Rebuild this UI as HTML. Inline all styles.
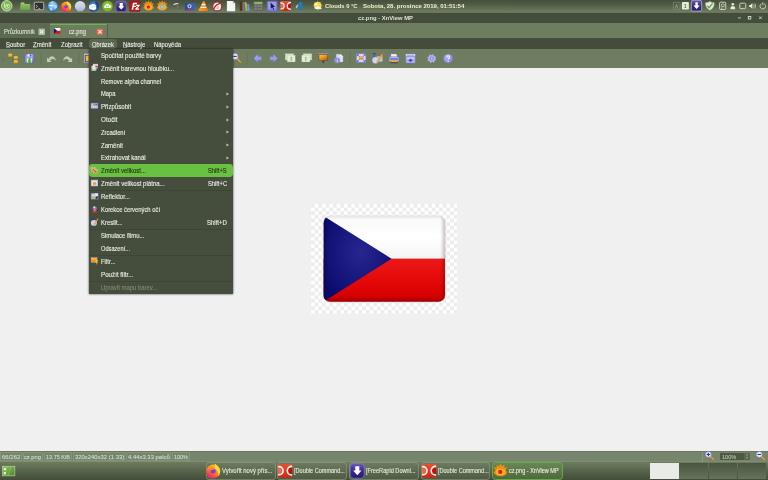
<!DOCTYPE html>
<html><head><meta charset="utf-8">
<style>
*{box-sizing:border-box;margin:0;padding:0}
html,body{width:768px;height:480px;overflow:hidden;background:#f0f0f0;font-family:"Liberation Sans",sans-serif;}
.abs,.t,.i{position:absolute}
svg{position:absolute;overflow:visible}
#panel{left:0;top:0;width:768px;height:13px;background:linear-gradient(#454f3c,#4e5a43 30%,#6a785b 85%,#74836a 93%,#5a6650 100%);}
#title{left:0;top:13px;width:768px;height:10.4px;background:#444c3c;}
#tabs{left:0;top:23.2px;width:768px;height:15.8px;background:#6e7c5f;}
#menubar{left:0;top:38.3px;width:768px;height:10.7px;background:#444c3c;}
#toolbar{left:0;top:49px;width:768px;height:18.5px;background:#6e7c5f;}
#status{left:0;top:450.8px;width:768px;height:11.2px;background:#76856b;border-top:1px solid #69785d}
#taskbar{left:0;top:461.3px;width:768px;height:18.7px;background:linear-gradient(#82927a 0,#7c8b72 0.7px,#6c7b60 1.2px,#5a674e 45%,#434d3a 100%);}
.t{white-space:nowrap;transform-origin:0 0;-webkit-text-stroke:0.8px currentColor}
.t u{text-decoration-thickness:3px;text-underline-offset:2px}
.tb{position:absolute;top:462.4px;height:17.2px;border:0.8px solid rgba(150,165,135,.5);border-radius:3.5px;background:rgba(120,135,105,.22)}
.sf{position:absolute;top:452.2px;height:9.2px;border:0.5px solid rgba(150,166,136,.45);}
#txt{position:absolute;left:0;top:0;width:768px;height:480px;will-change:transform}

</style></head><body>
<div id="panel" class="abs"></div>
<div id="title" class="abs"></div>
<div id="tabs" class="abs"></div>
<div id="menubar" class="abs"></div>
<div id="toolbar" class="abs"></div>
<div id="status" class="abs"></div>
<div id="taskbar" class="abs"></div>

<!-- TABS -->
<div class="abs" style="left:0;top:23.3px;width:50px;height:14.7px;background:#5c6952"></div>
<div class="abs" style="left:50px;top:23.6px;width:57.5px;height:1.2px;background:#62b944"></div>
<div class="abs" style="left:107px;top:23.6px;width:0.8px;height:14.7px;background:#56634b"></div>
<!-- inactive close -->
<svg style="left:38px;top:28px" width="8" height="8" viewBox="38 28 8 8"><rect x="38.400" y="28.500" width="6.600" height="6.400" rx="0.900" fill="#a9b89c"/><path d="M40.100 30.100L43.300 33.300M43.300 30.100L40.100 33.300" stroke="#f2f6ec" stroke-width="1.100"/></svg>
<!-- active close -->
<svg style="left:96px;top:28px" width="8" height="8" viewBox="96 28 8 8"><rect x="96.600" y="28.500" width="6.600" height="6.400" rx="0.900" fill="#e0694f"/><path d="M98.300 30.100L101.500 33.300M101.500 30.100L98.300 33.300" stroke="#fdeeea" stroke-width="1.100"/></svg>
<!-- flag tab icon -->
<svg style="left:53.75px;top:28.25px" width="6.3" height="5.7" viewBox="0 0 63 57"><rect width="63" height="28.5" fill="#fafafa"/><rect y="28.5" width="63" height="28.5" fill="#e01414"/><path d="M0 0L31 28.5L0 57z" fill="#15157a"/></svg>

<!-- TOOLBAR ICONS -->
<svg style="left:0;top:49px" width="768" height="19" viewBox="0 49 768 19">
<defs>
<linearGradient id="lv" x1="0" y1="0" x2="0" y2="1"><stop offset="0" stop-color="#aeb0f6"/><stop offset="1" stop-color="#8587e2"/></linearGradient>
<linearGradient id="og" x1="0" y1="0" x2="0" y2="1"><stop offset="0" stop-color="#ffc42a"/><stop offset="1" stop-color="#ec7a0c"/></linearGradient>
<radialGradient id="hp" cx="0.4" cy="0.35" r="0.75"><stop offset="0" stop-color="#adaff2"/><stop offset="0.6" stop-color="#9698e6"/><stop offset="1" stop-color="#7a7cd4"/></radialGradient>
</defs>
<!-- grip -->
<path d="M3 57.200v.8M3 58.800v.8M3 60.400v.8" stroke="#56634b" stroke-width="0.800"/>
<!-- tree -->
<linearGradient id="fy" x1="0" y1="0" x2="0" y2="1"><stop offset="0" stop-color="#fdd648"/><stop offset="0.45" stop-color="#f9b824"/><stop offset="1" stop-color="#ee9410"/></linearGradient>
<linearGradient id="flp" x1="0" y1="0" x2="1" y2="1"><stop offset="0" stop-color="#8a8ce6"/><stop offset="0.5" stop-color="#a2a4f0"/><stop offset="1" stop-color="#6668d4"/></linearGradient>
<path d="M12.700 57.500v4.300h1M12.700 57.800h1" fill="none" stroke="#4e5a44" stroke-width="0.400" opacity=".7"/>
<rect x="8.300" y="53.700" width="3.800" height="3.100" rx="0.300" fill="url(#fy)"/>
<rect x="13.800" y="56.200" width="3.900" height="2.900" rx="0.300" fill="url(#fy)"/>
<rect x="13.800" y="60.200" width="3.900" height="3.100" rx="0.300" fill="url(#fy)"/>
<!-- save -->
<rect x="25.200" y="54.100" width="8.500" height="8.500" rx="0.700" fill="url(#flp)" stroke="#5658c0" stroke-width="0.300"/>
<rect x="27.400" y="54.300" width="4.600" height="2.500" fill="#c4c6f6"/>
<rect x="27.600" y="54.400" width="1.700" height="1.700" fill="#f2f2fc"/>
<rect x="29.900" y="54.600" width="1.400" height="1.800" fill="#4446a8"/>
<rect x="27" y="58.400" width="5.100" height="4.100" fill="#f0f0fb"/>
<path d="M28.700 58.300h1.700v2.400h1.100l-1.950 2.900l-1.950-2.900h1.100z" fill="#3ab82e" stroke="#2a9a22" stroke-width="0.250"/>
<!-- sep -->
<path d="M40.750 52v13M78.750 52v13M247.400 52v13M350.300 52v13" stroke="#5f6c53" stroke-width="0.500"/>
<!-- undo -->
<path d="M46.900 57.500V62h4.500l-1.500-1.500q1.500-1.900 3.500-1.500q1.500.400 2.400 2q-.200-3.800-3.200-4.700q-2.800-.500-4.300 2.600z" fill="#c3d1b5" opacity=".92"/>
<!-- redo -->
<path d="M72.100 57.500V62h-4.500l1.500-1.500q-1.500-1.900-3.500-1.500q-1.500.400-2.400 2q.200-3.800 3.200-4.700q2.800-.500 4.300 2.600z" fill="#c3d1b5" opacity=".92"/>
<!-- partially hidden icon -->
<rect x="84.400" y="53.900" width="6" height="8.500" fill="#d8d8f6" stroke="#a8a8e4" stroke-width="0.400"/>
<rect x="85.300" y="55.200" width="5" height="6.600" fill="#f2a01e" stroke="#2c3298" stroke-width="0.700"/>
<rect x="86.300" y="56.200" width="1.400" height="4.500" fill="#fbd05a"/>
<path d="M85.200 54.500h.8M87.400 54.500h.8" stroke="#f6d040" stroke-width="0.700"/>
<!-- zoom out -->
<path d="M237.400 58.800l3 3.300" stroke="#a86a28" stroke-width="2.100" stroke-linecap="round"/>
<path d="M237.400 58.800l3 3.300" stroke="#e2a452" stroke-width="1.300" stroke-linecap="round"/>
<circle cx="235" cy="56.400" r="2.900" fill="#f0f0fc" stroke="#9698de" stroke-width="0.600"/>
<path d="M233.200 56.400h3.600" stroke="#2c2cb0" stroke-width="1.100"/>
<!-- arrows -->
<path d="M253.600 58.500l4.300-4.200v2.400h3.500v3.600h-3.500v2.400z" fill="url(#lv)" stroke="#7476d0" stroke-width="0.300"/>
<path d="M277.700 58.500l-4.300-4.200v2.400h-3.500v3.600h3.500v2.400z" fill="url(#lv)" stroke="#7476d0" stroke-width="0.300"/>
<!-- pale boxes 1 -->
<rect x="285.200" y="53.800" width="8.400" height="6.200" fill="#d3e1c6" stroke="#bfcfb0" stroke-width="0.350"/>
<rect x="287.400" y="55.200" width="7.700" height="6.700" fill="#e4efd9" stroke="#c6d5b8" stroke-width="0.350"/>
<path d="M291.300 56.600l1.600 1.500h-1v1.400h1l-1.600 1.500l-1.600-1.500h1v-1.400h-1z" fill="#a9b99b"/>
<!-- pale boxes 2 -->
<rect x="303.300" y="53.800" width="8.500" height="6.200" fill="#d3e1c6" stroke="#bfcfb0" stroke-width="0.350"/>
<rect x="301.900" y="55.200" width="8" height="6.700" fill="#e4efd9" stroke="#c6d5b8" stroke-width="0.350"/>
<path d="M305.800 56.600l1.600 1.500h-1v1.400h1l-1.600 1.500l-1.600-1.500h1v-1.400h-1z" fill="#a9b99b"/>
<!-- slideshow -->
<linearGradient id="ss" x1="0" y1="0" x2="0.6" y2="1"><stop offset="0" stop-color="#ffd030"/><stop offset="0.5" stop-color="#f49a14"/><stop offset="1" stop-color="#c8600a"/></linearGradient>
<rect x="318.100" y="53.100" width="10.200" height="1.300" fill="#8e949a"/>
<rect x="318.900" y="54.400" width="8.800" height="6.300" fill="url(#ss)" stroke="#4e5668" stroke-width="0.600"/>
<path d="M321.800 61h3l-1.500 2.600z" fill="#40463e"/>
<!-- doc info -->
<path d="M336.200 54.200h4.600l2.200 2.200v5.500h-6.800z" fill="#dedef8" stroke="#b4b4e0" stroke-width="0.300"/>
<path d="M340.800 54.200v2.200h2.200z" fill="#f6f6fe"/>
<circle cx="337.300" cy="60.300" r="2.700" fill="#8688e2" stroke="#a8aaf0" stroke-width="0.500"/>
<path d="M337.300 59.800v2M337.300 58.500v.6" stroke="#fff" stroke-width="0.800"/>
<!-- fullscreen -->
<rect x="356.400" y="53.800" width="9.500" height="8.500" fill="#d5d5fa" stroke="#7478de" stroke-width="0.400"/>
<path d="M357.100 54.500l2.400 2.200M365.200 54.500l-2.400 2.200M357.100 61.600l2.400-2.200M365.200 61.600l-2.400-2.200" stroke="#4a50cc" stroke-width="0.700"/>
<path d="M356.900 54.300h1.900l-1.900 1.900zM365.400 54.300h-1.900l1.900 1.900zM356.900 61.800h1.900l-1.900-1.900zM365.400 61.800h-1.900l1.900-1.900z" fill="#3a42c4"/>
<rect x="359.300" y="56.700" width="3.800" height="2.500" fill="url(#og)" stroke="#c8780e" stroke-width="0.250"/>
<!-- paint -->
<path d="M372.500 53.500h3.600M374.300 53.500v3.400" stroke="#3a42b4" stroke-width="0.900"/>
<rect x="377" y="56.300" width="5.400" height="5.300" fill="#c4c6f4" stroke="#a2a4e8" stroke-width="0.400"/>
<circle cx="375.600" cy="60.300" r="3.300" fill="#d4d4fa" stroke="#9a9ce4" stroke-width="0.400"/>
<path d="M382 53.200l1.300 1l-4.700 7.500l-1.800 1l.4-2z" fill="#f6b42c" stroke="#a86418" stroke-width="0.300"/>
<path d="M382 53.200l1.300 1l-.7 1.100l-1.300-1z" fill="#e84a5a"/>
<!-- printer -->
<path d="M391 57v-2.900h5l.9.900v2z" fill="#eeeef8" stroke="#b4b4d8" stroke-width="0.300"/>
<rect x="389" y="56.700" width="10" height="4.800" rx="1.200" fill="#b2b6ee" stroke="#6a6ed4" stroke-width="0.400"/>
<path d="M389.600 59h8.800" stroke="#3a40b0" stroke-width="0.900"/>
<rect x="391.100" y="60.300" width="6" height="2" fill="#f8b424" stroke="#c47a10" stroke-width="0.250"/>
<rect x="390.600" y="62.300" width="7" height="0.900" fill="#2e3268"/>
<!-- capture -->
<rect x="405.800" y="54" width="9.400" height="2.600" fill="#e6e6fb" stroke="#8a8cd8" stroke-width="0.400"/>
<path d="M406.600 55.300h7.800" stroke="#5a5ed0" stroke-width="0.500"/>
<path d="M405.800 56.600h9.400v5.500q0 1-1 1h-7.400q-1 0-1-1z" fill="#b2b4f2" stroke="#7a7cd8" stroke-width="0.400"/>
<path d="M407.200 58.200h6.600" stroke="#e8e8fc" stroke-width="0.700"/>
<circle cx="410.500" cy="60.300" r="1.500" fill="#3c46cc"/>
<path d="M407.600 60.300h1.200M412.200 60.300h1.200" stroke="#4a52cc" stroke-width="0.700"/>
<!-- gear -->
<g transform="translate(431.700 58.500)">
<circle r="3.800" fill="none" stroke="#a8aaf0" stroke-width="1.200" stroke-dasharray="1.600 1.385"/>
<circle r="3.500" fill="#b2b4f5"/>
<circle r="2" fill="#8284da"/>
<circle r="1" fill="#d0d2fc"/>
</g>
<!-- help -->
<circle cx="448.100" cy="58.500" r="4.600" fill="url(#hp)" stroke="#7678d0" stroke-width="0.500"/>
<path d="M446.700 57.200q.1-1.500 1.500-1.500q1.400.1 1.400 1.300q0 .8-.8 1.300q-.6.400-.6 1.100" fill="none" stroke="#fafaff" stroke-width="1.100"/>
<circle cx="448.200" cy="61.300" r=".65" fill="#fafaff"/>
</svg>

<!-- MENUBAR highlight -->
<div class="abs" style="left:88.6px;top:39px;width:28.4px;height:10px;background:#5b6851;border-radius:3px"></div>

<!-- POPUP -->
<div id="popup" class="abs" style="left:89px;top:49px;width:143.7px;height:245.2px;background:#454d3c;box-shadow:0 0.4px 2px rgba(0,0,0,.75)"></div>
<div class="abs" style="left:89.1px;top:164.4px;width:143.6px;height:13px;background:#6ac040;border-radius:3.4px"></div>

<!-- IMAGE -->
<svg style="left:310.75px;top:204.25px" width="146.5" height="109.75" viewBox="0 0 320 240">
<defs>
<pattern id="ck" width="16" height="16" patternUnits="userSpaceOnUse"><rect width="16" height="16" fill="#fefefe"/><rect width="8" height="8" fill="#ececec"/><rect x="8" y="8" width="8" height="8" fill="#ececec"/></pattern>
<clipPath id="fc"><rect x="27" y="26.500" width="266" height="187.500" rx="15" ry="15"/></clipPath>
<linearGradient id="gw" x1="0" y1="0" x2="0" y2="1"><stop offset="0" stop-color="#e4e4e4"/><stop offset="0.08" stop-color="#fafafa"/><stop offset="0.5" stop-color="#ffffff"/><stop offset="1" stop-color="#f4f4f4"/></linearGradient>
<linearGradient id="gr" x1="0" y1="0" x2="0" y2="1"><stop offset="0" stop-color="#ec1818"/><stop offset="0.6" stop-color="#e30606"/><stop offset="0.88" stop-color="#d40000"/><stop offset="1" stop-color="#9c0000"/></linearGradient>
<radialGradient id="gb" cx="0.55" cy="0.42" r="0.65"><stop offset="0" stop-color="#26268e"/><stop offset="0.6" stop-color="#15157c"/><stop offset="1" stop-color="#0a0a6c"/></radialGradient>
<linearGradient id="ge" x1="0" y1="0" x2="1" y2="0"><stop offset="0" stop-color="#000" stop-opacity=".25"/><stop offset="0.04" stop-color="#000" stop-opacity="0"/><stop offset="0.96" stop-color="#000" stop-opacity="0"/><stop offset="1" stop-color="#000" stop-opacity=".22"/></linearGradient>
</defs>
<rect width="320" height="240" fill="url(#ck)"/>
<rect x="26" y="25.500" width="268" height="189.500" rx="16" fill="#c98080" opacity=".4"/>
<g clip-path="url(#fc)">
<rect x="27" y="26" width="266" height="94" fill="url(#gw)"/>
<rect x="27" y="119.500" width="266" height="95" fill="url(#gr)"/>
<path d="M27 26L176 119.500L27 214z" fill="url(#gb)"/>
<rect x="27" y="26" width="266" height="188.500" fill="url(#ge)"/>
</g>
</svg>

<!-- STATUS fields -->
<div class="sf" style="left:0.3px;width:21.8px"></div>
<div class="sf" style="left:22.8px;width:20px"></div>
<div class="sf" style="left:43.5px;width:28.4px"></div>
<div class="sf" style="left:72.6px;width:52.7px"></div>
<div class="sf" style="left:126px;width:45.4px"></div>
<div class="sf" style="left:172.1px;width:18px"></div>
<div class="abs" style="left:702px;top:451.5px;width:0.8px;height:10.5px;background:#8a987e"></div>
<div class="abs" style="left:719.5px;top:452.9px;width:30.2px;height:6.9px;background:#4e5944;border-radius:1px"></div>
<div class="abs" style="left:744.1px;top:452.9px;width:5.6px;height:6.9px;background:#5a6750;border-radius:0 1px 1px 0"></div>

<!-- TASKBAR buttons -->
<div class="tb" style="left:205.5px;width:70px"></div>
<div class="tb" style="left:276.6px;width:70.2px"></div>
<div class="tb" style="left:348.6px;width:70.3px"></div>
<div class="tb" style="left:420.5px;width:69.8px"></div>
<div class="tb" style="left:492.1px;width:70.7px;border-color:#62ac44;background:linear-gradient(rgba(105,145,80,.6),rgba(85,125,62,.55))"></div>
<!-- workspace switcher -->
<div class="abs" style="left:650px;top:462.6px;width:28.8px;height:16.2px;background:#e9ebe6"></div>
<div class="abs" style="left:679.3px;top:462.6px;width:28.8px;height:16.2px;background:linear-gradient(#4a553f,#65735a)"></div>
<div class="abs" style="left:708.7px;top:462.6px;width:28.6px;height:16.2px;background:linear-gradient(#4a553f,#65735a)"></div>
<div class="abs" style="left:737.8px;top:462.6px;width:28.4px;height:16.2px;background:linear-gradient(#4a553f,#65735a)"></div>

<!-- PANEL ICONS -->
<svg style="left:0;top:0" width="768" height="13" viewBox="0 0 768 13">
<defs>
<linearGradient id="fold" x1="0" y1="0" x2="0" y2="1"><stop offset="0" stop-color="#94c56c"/><stop offset="1" stop-color="#6b9f48"/></linearGradient>
<radialGradient id="globe" cx="0.55" cy="0.4" r="0.62"><stop offset="0" stop-color="#a8d4f6"/><stop offset="0.55" stop-color="#6eb2ea"/><stop offset="0.85" stop-color="#2f7bcc"/><stop offset="1" stop-color="#185aa8"/></radialGradient>
<linearGradient id="ffx" x1="0.8" y1="0.1" x2="0.25" y2="0.95"><stop offset="0" stop-color="#ffc830"/><stop offset="0.45" stop-color="#ff8a20"/><stop offset="0.8" stop-color="#fb4a3a"/><stop offset="1" stop-color="#f0306a"/></linearGradient>
<linearGradient id="ball" x1="0" y1="0" x2="0" y2="1"><stop offset="0" stop-color="#d4dfee"/><stop offset="0.55" stop-color="#c3d1e5"/><stop offset="1" stop-color="#a5a6cf"/></linearGradient>
<radialGradient id="tb" cx="0.5" cy="0.4" r="0.65"><stop offset="0" stop-color="#4a9cf0"/><stop offset="1" stop-color="#17479c"/></radialGradient>
<linearGradient id="purp" x1="0" y1="0" x2="0" y2="1"><stop offset="0" stop-color="#6a5cb8"/><stop offset="0.5" stop-color="#3a2a86"/><stop offset="1" stop-color="#2c1c70"/></linearGradient>
<radialGradient id="xn" cx="0.5" cy="0.5" r="0.5"><stop offset="0" stop-color="#ffb52e"/><stop offset="1" stop-color="#ef8a12"/></radialGradient>
<linearGradient id="vlc" x1="0" y1="0" x2="1" y2="0"><stop offset="0" stop-color="#ff9d2a"/><stop offset="1" stop-color="#ee7608"/></linearGradient>
<linearGradient id="dc" x1="0" y1="0" x2="0" y2="1"><stop offset="0" stop-color="#e5503a"/><stop offset="1" stop-color="#c62a18"/></linearGradient>
<linearGradient id="lav" x1="0" y1="0" x2="0" y2="1"><stop offset="0" stop-color="#9a9ce8"/><stop offset="1" stop-color="#7a7cd6"/></linearGradient>
</defs>
<!-- mint -->
<circle cx="6.75" cy="5.75" r="5.2" fill="#79b94b" stroke="#e9f1e1" stroke-width="0.8"/>
<path d="M4.5 3.100v3.700a1.400 1.400 0 0 0 1.400 1.400h2a1.400 1.400 0 0 0 1.400-1.400V5.200a.900.900 0 0 0-1.800 0v1.500M7.500 5.200a.900.900 0 0 0-1.700-.3v1.800" fill="none" stroke="#f4f9ee" stroke-width="0.700" stroke-linecap="round" stroke-linejoin="round"/>
<!-- folder -->
<path d="M20.6 3.3q0-.5.5-.5h2.8q.5 0 .7.5l.3.8h4.7q.5 0 .5.5v5q0 .5-.5.5h-9q-.5 0-.5-.5z" fill="url(#fold)"/>
<path d="M21 3h3" stroke="#e4f0d8" stroke-width="0.5"/>
<!-- terminal -->
<rect x="34.3" y="2.2" width="9.4" height="7.6" rx="0.5" fill="#2f2f2f" stroke="#b4b4b2" stroke-width="0.95"/>
<path d="M36 5l1.5 1.4L36 7.8M38.5 8.4h1.6" fill="none" stroke="#f0f0f0" stroke-width="0.65"/>
<!-- globe -->
<circle cx="52.5" cy="6.4" r="5.3" fill="url(#globe)"/>
<path d="M48.200 5.200q1.300-.700 2.800-.400q1.400.400 2.400-.100q.300.700-.700 1.200q-1.400.400-2.600.100q-1.200.100-1.900-.800z" fill="#f2f8fd" opacity=".9"/>
<path d="M50.500 2.200q1.600-.900 3.400-.600q-1.300.900-.900 1.700q-1.600.400-2.500-1.100zM54.400 5.200q1.500-.400 2.400.600q.4 1.600-.400 2.900q-1.300.500-1.700-.900q-.700-1.400-.300-2.600zM49.800 7.800q1.300-.200 2.200.700q.5 1.300-.2 2.400q-1.300-.300-2-1.500z" fill="#cfe6f8" opacity=".75"/>
<path d="M48.300 3.800q-.9 1.200-1 2.600M55.900 9.900q1.200-.900 1.700-2.400" stroke="#0e4590" stroke-width="0.700" fill="none" opacity=".7"/>
<!-- firefox -->
<circle cx="66.2" cy="6.700" r="5" fill="url(#ffx)"/>
<path d="M61.100 7.800q.2 3.100 3.200 4q2.600.500 4.600-.900q-3.500.500-5.600-1.300q-1.300-1.100-2.200-1.800z" fill="#f0326a"/>
<path d="M67.600.900q.700 1.300 2 2q1.500 1.800 1.600 3.800q0 2.400-1.600 3.900q.8-2.400-.3-4.200q-.9-1.400-2.400-1.700q.9-1.100.4-2.400q-.1-.800.300-1.400z" fill="#ffd935"/>
<path d="M61.500 5.300q.3-1.600 1.500-2.600q0 1 .6 1.500q1.200-.8 2.700-.6q-1.100.6-1.300 1.700q-2-.6-3.500 0z" fill="#ff8a1e"/>
<circle cx="66" cy="6.500" r="1.900" fill="#7a3ee0"/>
<path d="M64.300 5.800q.9-.900 2.400-.600" stroke="#ff9a2a" stroke-width="0.700" fill="none"/>
<!-- ball -->
<circle cx="80.1" cy="6.25" r="5.300" fill="url(#ball)"/>
<!-- thunderbird -->
<circle cx="93.600" cy="6.200" r="5.300" fill="url(#tb)"/>
<path d="M96.200 1.600q2.600 1.500 2.700 4.600q-.100 3.300-3 4.900q1.700-2.200 1.200-4.900q-.400-2.400-2.400-3.600z" fill="#1a3f98"/>
<path d="M89.100 5.300l3.300-1.200q2.300-.300 3.500 1.200l.4 3.700q-1.400 1.400-3.600 1.100l-3.400-1.100q-.500-1.900-.200-3.700z" fill="#f6f8fc"/>
<path d="M89.400 5.700l3.200 1.700l3.300-1.900" fill="none" stroke="#aebfdc" stroke-width="0.500"/>
<path d="M90.300 10.200q1.300 1.200 3.300 1.300q-1.400-.400-2-1.200z" fill="#16245c"/>
<!-- green circle -->
<circle cx="107.500" cy="6" r="5.300" fill="#7db826"/>
<path d="M105 8.100q-1.200-.100-1.200-1.300q.100-1.100 1.300-1.200q.300-1.900 2.200-2.100q1.700-.100 2.300 1.400q1.500-.200 1.800 1.300q.100 1.600-1.300 1.900z" fill="#f6fbef"/>
<path d="M106.700 5.300v1.800M108.300 5.300v1.800" stroke="#7db826" stroke-width="0.700"/>
<!-- purple download -->
<rect x="116" y="1" width="10.200" height="10.600" rx="2.600" fill="url(#purp)" stroke="#8a82ca" stroke-width="0.500"/>
<path d="M119.700 2.900h3.100v3.300h1.600l-3.150 3.400l-3.150-3.400h1.600z" fill="#fff"/>
<!-- filezilla -->
<rect x="129.700" y="1.100" width="10.300" height="10.200" rx="0.500" fill="#bf141c" stroke="#8c0c12" stroke-width="0.500"/>
<path d="M131.600 9.700l1.400-6.900h4.100l-.3 1.400h-2.500l-.3 1.500h2.100l-.3 1.400h-2.100l-.5 2.600zM135.200 9.700l.2-1.100l2.500-2.600h-1.900l.3-1.300h3.600l-.2 1.100l-2.500 2.600h2.100l-.3 1.300z" fill="#fff"/>
<!-- xnview 1 -->
<g transform="translate(148.600 6.200)">
<path d="M-5.400 1.200L-4-.600L-5.200-2.600L-3-2.700L-3.100-4.900L-1.200-3.600L0-5.800L1.200-3.600L3.100-4.900L3-2.700L5.200-2.600L4-.600L5.400 1.200Q3.600 4.300 0 4.300Q-3.600 4.300-5.400 1.200z" fill="#f08c10"/>
<ellipse cx="0" cy=".900" rx="3.700" ry="2.600" fill="#ffb32e"/>
<circle cx="-.200" cy=".800" r="1.700" fill="#d8201a"/>
</g>
<!-- xnview 2 -->
<g transform="translate(162.200 6.200)">
<path d="M-5.400 1.200L-4-.600L-5.200-2.600L-3-2.700L-3.100-4.900L-1.200-3.600L0-5.800L1.200-3.600L3.100-4.900L3-2.700L5.200-2.600L4-.600L5.400 1.200Q3.600 4.300 0 4.300Q-3.600 4.300-5.400 1.200z" fill="#f08c10"/>
<ellipse cx="0" cy=".900" rx="3.700" ry="2.600" fill="#ffb32e"/>
<circle cx="-.100" cy=".700" r="2.300" fill="#5cbcee"/>
<path d="M-1.200.700h2.300" stroke="#ffcf3a" stroke-width="1.200"/>
</g>
<!-- dark thing -->
<path d="M172 5.600q1.500-2.700 4.400-3.100q2.600-.200 3.400 1.600q.300 1.300-.900 1.900l1.900 2.500l-.700.700l-2.400-2.300q-1.700.700-3.500.300q-1.700-.400-2.200-1.600z" fill="#5c5c58"/>
<path d="M172.800 5q1.600-2 4-2.100q1.800.100 2 1.200q-1.900-.200-3.100.500q-1.300.700-2.900.400z" fill="#dcdcd8"/>
<path d="M177.200 6.300l1.400.2l-.3 1.100l-1.300-.3z" fill="#e08a2a"/>
<!-- blue/red box -->
<linearGradient id="bx" x1="0" y1="0" x2="1" y2="0"><stop offset="0" stop-color="#2946a4"/><stop offset="1" stop-color="#3c62c4"/></linearGradient>
<rect x="184.900" y="3" width="10" height="7.600" rx="0.700" fill="url(#bx)"/>
<rect x="186.300" y="9.200" width="6.600" height="1.100" fill="#d02c50"/>
<circle cx="189.500" cy="6.200" r="1.600" fill="none" stroke="#f2f5fb" stroke-width="0.900"/>
<!-- vlc -->
<path d="M203.200 1l1.300 0l2.400 7.500l.9 0l0 2.500l-9 0l0-2.500l.9 0z" fill="url(#vlc)"/>
<path d="M201.900 3.700h3.300l.5 1.600h-4.300zM200.800 6.700h5.400l.4 1.300h-6.200z" fill="#f8f4ee"/>
<!-- red/white circle -->
<circle cx="217.200" cy="6.400" r="4.500" fill="#f1eeee" stroke="#b8201f" stroke-width="1.100"/>
<path d="M213.800 9.300q1.200-4.800 6.400-6" fill="none" stroke="#b8201f" stroke-width="1.300"/>
<path d="M216 9q.5-2.400 2.600-3.400l.4 3.600z" fill="#c9c4c4"/>
<!-- white doc -->
<path d="M226.900 1h6l2.300 2.300v8h-8.300z" fill="#f6f6f4"/>
<path d="M232.900 1v2.300h2.300z" fill="#9a9a96"/>
<!-- books -->
<rect x="239.800" y="1.400" width="2.500" height="9.500" fill="#63300f"/>
<rect x="242.600" y="2.200" width="1.900" height="8.600" fill="#5b7f92"/>
<path d="M244.500 2.300l1.900-.3l1.300 8.700l-2 .2z" fill="#d2a84e"/>
<path d="M247 4.300l1.800-.4l1.300 6.800l-1.900.3z" fill="#5a9ae6"/>
<!-- calculator -->
<rect x="253.500" y="1.300" width="9.500" height="9.700" rx="1" fill="#626360"/>
<rect x="254.200" y="2.200" width="8.100" height="1.500" rx="0.300" fill="#8fdc5c"/>
<rect x="254.500" y="4.800" width="7.500" height="5.300" fill="#7f807d"/>
<path d="M257 4.800v5.300M259.600 4.800v5.300M254.500 7.400h7.500" stroke="#5a5b58" stroke-width="0.500"/>
<!-- purple cursor -->
<rect x="266.900" y="0.900" width="10.400" height="10.500" rx="1.200" fill="#7577d2" stroke="#5c5fb0" stroke-width="0.500"/>
<rect x="268" y="2" width="8.200" height="7.400" fill="#999bee"/>
<path d="M270.600 2.600l4.600 4.300l-2 .2l1.100 2.300l-.9.400l-1.100-2.300l-1.500 1.300z" fill="#1d1d3c"/>
<!-- DC -->
<rect x="280.400" y="1" width="10.600" height="9.900" rx="1.300" fill="url(#dc)"/>
<clipPath id="dcc"><rect x="280.400" y="1" width="10.600" height="9.900" rx="1.300"/></clipPath>
<g clip-path="url(#dcc)"><circle cx="281" cy="5.900" r="2.500" fill="#ea6a48"/><circle cx="290.600" cy="5.900" r="2.700" fill="#b81414"/><circle cx="281" cy="5.900" r="3.100" fill="none" stroke="#fdf4f0" stroke-width="1.200"/><circle cx="290.600" cy="5.900" r="3.300" fill="none" stroke="#fdf4f0" stroke-width="1.200"/></g>
<!-- blue swirl -->
<path d="M298.600 2.400Q301.500 1.700 303.100 2.600Q301.900 3.400 302.100 4.500Q303.400 6 303.100 7.800Q302.400 9.900 299.800 10.100Q297.800 10 297 8.900Q298.400 9.100 299.100 8.200Q299.700 7.300 299.100 6.200Q297.900 4.100 298.600 2.400z" fill="#1b7cc2"/>
<path d="M298.400 4.200q-1.900.500-2.500 2q-.400 1.400.600 2.300q.700-.300 1.100-1.500q.700-1.200.800-2.800z" fill="#b7bcbc"/>
<!-- weather -->
<g stroke="#f0d83a" stroke-width="0.500"><path d="M317.700.800v1M317.700 9.400v1M313 5.600h1M321.400 5.600h1M314.400 2.300l.7.700M320.300 8.200l.7.700M321 2.300l-.7.700M315.100 8.200l-.7.700"/></g>
<circle cx="317.700" cy="5.600" r="3.800" fill="#f3dc3e"/>
<path d="M314.500 5q-.500-.100-.500-.700q.200-.500.800-.500q.300-.700 1.100-.700q.800.100 1 .700q.700.100.700.700q-.100.500-.600.500z" fill="#f8f8f6"/>
<path d="M316 9q-1-.100-1-1q.100-.800 1-.900q.400-1 1.500-1q1 0 1.400.9q1-.200 1.500.500q.700-.100 1.100.500q.200.800-.600 1z" fill="#f6f7f8"/>
<path d="M316 9.100h5" stroke="#c4ccd4" stroke-width="0.400"/>

<!-- RIGHT SIDE -->
<rect x="673.400" y="2.300" width="6.600" height="7" rx="0.500" fill="none" stroke="#8a977e" stroke-width="0.600"/>

<rect x="681.900" y="2.100" width="7" height="7.400" rx="0.800" fill="#e0ecd4"/>

<rect x="691.300" y="0.200" width="10.300" height="10.900" rx="1.600" fill="url(#purp)" stroke="#c6c2de" stroke-width="0.700"/>
<path d="M695.400 2.200h2.400v3.400h2l-3.200 3.400l-3.200-3.400h2z" fill="#fff"/>
<!-- shield -->
<path d="M709.900 1.400q2 1.300 4.400 1.300q.2 5.300-4.400 7.600q-4.600-2.300-4.400-7.600q2.400 0 4.400-1.300z" fill="#e8ece4" stroke="#9aa294" stroke-width="0.500"/>
<path d="M707.400 5.800l1.800 1.900l3.400-4.300" fill="none" stroke="#4caf2a" stroke-width="1.300"/>
<!-- disk -->
<rect x="719.600" y="2.200" width="6.100" height="7.300" rx="1" fill="none" stroke="#e6eadf" stroke-width="0.800"/>
<circle cx="722.800" cy="5.300" r="1.500" fill="none" stroke="#e6eadf" stroke-width="0.700"/>
<path d="M721 8.200h1.500" stroke="#e6eadf" stroke-width="0.600"/>
<!-- person -->
<circle cx="732.800" cy="4.300" r="1.300" fill="#e8ecdf"/>
<path d="M730.500 9.200v-1.500q0-1.300 1.300-1.500h2q1.300.2 1.300 1.500v1.500z" fill="#e8ecdf"/>
<!-- square -->
<rect x="739.800" y="3.200" width="5.900" height="5.500" rx="1.100" fill="none" stroke="#e8ecdf" stroke-width="0.800"/>
<!-- speaker -->
<path d="M749.200 4.900h1.300l1.900-1.800v5.800l-1.900-1.800h-1.300z" fill="#e8ecdf"/>
<path d="M753.600 4.300q.9 1.700 0 3.400M754.900 3.300q1.500 2.700 0 5.400" fill="none" stroke="#e8ecdf" stroke-width="0.600"/>
<!-- power -->
<path d="M761.400 3.700a2.800 2.800 0 1 0 2.800 0" fill="none" stroke="#e8ecdf" stroke-width="0.750"/>
<path d="M762.800 2.300v2.800" stroke="#e8ecdf" stroke-width="0.750"/>
</svg>
<!-- window buttons -->
<svg style="left:730px;top:13px" width="38" height="10" viewBox="730 13 38 10">
<path d="M738 17.900h2.900" stroke="#d8ddcc" stroke-width="0.800"/>
<rect x="748.300" y="16.500" width="2.500" height="2.500" fill="none" stroke="#d8ddcc" stroke-width="0.900"/>
<path d="M759.200 16.500l2.500 2.500M761.700 16.500l-2.500 2.500" stroke="#d8ddcc" stroke-width="0.900"/>
</svg>
<!-- MENU ICONS -->
<svg style="left:88px;top:49px" width="146" height="246" viewBox="88 49 146 246">
<defs>
<radialGradient id="cw" cx="0.5" cy="0.45" r="0.5"><stop offset="0" stop-color="#ffffff"/><stop offset="0.45" stop-color="#fff" stop-opacity=".6"/><stop offset="1" stop-color="#fff" stop-opacity="0"/></radialGradient>
<clipPath id="cwc"><circle cx="94.400" cy="67.700" r="3.300"/></clipPath>
<linearGradient id="org" x1="0" y1="0" x2="0" y2="1"><stop offset="0" stop-color="#ffc02a"/><stop offset="1" stop-color="#ee7d0e"/></linearGradient>
</defs>
<!-- color depth -->
<rect x="91" y="63.900" width="7" height="7" fill="#c9c2dc" opacity=".55"/>
<rect x="92.800" y="63.900" width="5.200" height="2.100" fill="#e6cfe2" opacity=".9"/>
<rect x="91" y="63.900" width="1.800" height="1.700" fill="#2c2c9c"/>
<rect x="96.500" y="68.800" width="1.500" height="2.100" fill="#2c2c9c"/>
<clipPath id="cwc2"><circle cx="93.800" cy="68.200" r="2.900"/></clipPath>
<g clip-path="url(#cwc2)">
<path d="M93.800 68.200L90.800 65.200h6z" fill="#f4e76a"/>
<path d="M93.800 68.200L96.800 65.200v6z" fill="#a4d426"/>
<path d="M93.800 68.200L96.800 71.200h-6z" fill="#72c8f0"/>
<path d="M93.800 68.200L90.800 71.200v-6z" fill="#e8641e"/>
<circle cx="93.800" cy="68.200" r="2.900" fill="url(#cw)"/>
</g>
<rect x="94.900" y="65.800" width="1" height="1.100" fill="#30c0b0"/>
<rect x="96.100" y="65.800" width="1.100" height="1.200" fill="#e8307a"/>
<!-- prizpusobit -->
<rect x="91" y="103.100" width="6.900" height="5.400" fill="#b8b8ea" stroke="#8486c8" stroke-width="0.400"/>
<rect x="91.800" y="103.900" width="1.200" height="1.500" fill="#eadc3c"/><rect x="93.200" y="103.900" width="1.200" height="1.500" fill="#4cc05a"/><rect x="94.600" y="103.900" width="1.200" height="1.500" fill="#e6409a"/><rect x="96" y="103.900" width="1.200" height="1.500" fill="#4c62d8"/>
<rect x="91.600" y="106" width="5.700" height="1.900" fill="#dcdcf4"/>
<path d="M92.300 107h.7M94 107h.7M95.700 107h.7" stroke="#44446a" stroke-width="0.600"/>
<!-- resize -->
<rect x="91.300" y="167.700" width="3.900" height="3.700" fill="url(#org)" stroke="#c8c8f0" stroke-width="0.350"/>
<rect x="93.400" y="169.600" width="4.300" height="3.800" fill="url(#org)" stroke="#c8c8f0" stroke-width="0.350"/>
<path d="M93.600 169.700l2 1.700" stroke="#4a56d0" stroke-width="0.800"/>
<path d="M93 169.100l1.300.2l-1 1zM96.300 172l-1.300-.2l1-1z" fill="#4a56d0"/>
<!-- canvas -->
<rect x="91.200" y="180.100" width="6.500" height="5.800" fill="#e6e6f8" stroke="#bcbcf0" stroke-width="0.600"/>
<rect x="93" y="181.900" width="3.200" height="2.700" fill="url(#org)"/>
<!-- reflektor -->
<rect x="91.100" y="193.300" width="7" height="5.800" fill="#c4d4de" stroke="#7c7cc0" stroke-width="0.600"/>
<path d="M94.500 193.600h3.300v2.400q-2-.2-3.300-2.400z" fill="#f4f8fa"/>
<rect x="92.200" y="196.500" width="2.200" height="1.900" fill="#f09a1c"/>
<path d="M95.500 198.800v-1.800l2.200-1v2.800z" fill="#26263c"/>
<!-- red eye -->
<path d="M92.500 208.600q0-2.600 2.200-2.600q2.200 0 2.200 2.600q0 .8-1 1h-2.400q-1-.2-1-1z" fill="#7a80dc"/>
<circle cx="94.200" cy="207.400" r=".8" fill="#eef0fc"/>
<path d="M93 209.600h3.400l.4 2.800h-4.200z" fill="#e03434"/>
<path d="M93.900 209.400h1.600v1.200h-1.600z" fill="#f4b0b8"/>
<!-- draw -->
<path d="M91.400 218.300h2.400M92.600 218.300v2" stroke="#2c3490" stroke-width="0.700"/>
<ellipse cx="93.900" cy="222.900" rx="3" ry="2.900" fill="#cdcdf6"/>
<path d="M97.600 218.400l.9.700l-3.400 5.300l-1.300.7l.3-1.500z" fill="#f0a424"/>
<path d="M97.600 218.400l.9.700l-.5.800l-.9-.7z" fill="#e8506a"/>
<!-- filter -->
<rect x="91.100" y="257.800" width="5.900" height="4.500" fill="url(#org)" stroke="#c4c0e0" stroke-width="0.400"/>
<path d="M95.800 259.800l2.400.3l-1 1.800l.6.100l-1.300 3l-.1-2.200l-.8-.1z" fill="#fbb81e"/>
</svg>
<!-- BOTTOM ICONS -->
<svg style="left:0;top:450px" width="768" height="30" viewBox="0 450 768 30">
<defs>
<linearGradient id="sd" x1="0" y1="0" x2="1" y2="1"><stop offset="0" stop-color="#8cc45a"/><stop offset="1" stop-color="#4f8a2a"/></linearGradient>
<linearGradient id="ffb" x1="0.800" y1="0.100" x2="0.250" y2="0.950"><stop offset="0" stop-color="#ffc830"/><stop offset="0.450" stop-color="#ff8a20"/><stop offset="0.800" stop-color="#fb4a3a"/><stop offset="1" stop-color="#f0306a"/></linearGradient>
<linearGradient id="dcb" x1="0" y1="0" x2="0" y2="1"><stop offset="0" stop-color="#e5503a"/><stop offset="1" stop-color="#c62a18"/></linearGradient>
<linearGradient id="pub" x1="0" y1="0" x2="0" y2="1"><stop offset="0" stop-color="#6a58c0"/><stop offset="0.500" stop-color="#3b2790"/><stop offset="1" stop-color="#2a1872"/></linearGradient>
</defs>
<!-- show desktop -->
<rect x="2.400" y="466.200" width="12.500" height="9.700" fill="url(#sd)" stroke="#d4dccb" stroke-width="0.500"/>
<path d="M7 466.500l-2 9.200M11 466.500l-3 9.200" stroke="#a4d47a" stroke-width="0.800" opacity=".5"/>
<rect x="3.800" y="468.100" width="2" height="2.100" fill="#f4f8ee"/><rect x="3.800" y="472.100" width="2" height="2.100" fill="#f4f8ee"/>
<!-- firefox -->
<g transform="translate(213.400 470.900) scale(1.360)">
<circle cx="0" cy=".3" r="5" fill="url(#ffb)"/>
<path d="M-5.100 1.400q.2 3.100 3.200 4q2.600.5 4.600-.9q-3.500.5-5.600-1.300q-1.300-1.100-2.200-1.800z" fill="#f0326a"/>
<path d="M1.400-5.500q.7 1.300 2 2q1.500 1.800 1.600 3.800q0 2.400-1.600 3.900q.8-2.400-.3-4.200q-.9-1.400-2.400-1.700q.9-1.100.4-2.400q-.1-.8.300-1.400z" fill="#ffd935"/>
<path d="M-4.700-1.100q.3-1.600 1.500-2.600q0 1 .6 1.500q1.200-.8 2.700-.6q-1.100.6-1.300 1.700q-2-.6-3.500 0z" fill="#ff8a1e"/>
<circle cx="-.2" cy=".1" r="1.900" fill="#7a3ee0"/>
<path d="M-1.900-.6q.9-.9 2.400-.6" stroke="#ff9a2a" stroke-width="0.700" fill="none"/>
</g>
<!-- DC 1 -->
<g id="dcicon">
<rect x="278.100" y="463.900" width="14.100" height="14.100" rx="1.700" fill="url(#dcb)"/>
<clipPath id="dcbc"><rect x="278.100" y="463.900" width="14.100" height="14.100" rx="1.700"/></clipPath>
<g clip-path="url(#dcbc)"><circle cx="279" cy="470.700" r="3.300" fill="#ea6a48"/><circle cx="291.600" cy="470.700" r="3.500" fill="#b81414"/><circle cx="279" cy="470.700" r="4.100" fill="none" stroke="#fdf4f0" stroke-width="1.600"/><circle cx="291.600" cy="470.700" r="4.300" fill="none" stroke="#fdf4f0" stroke-width="1.600"/></g>
</g>
<use href="#dcicon" x="143.900"/>
<!-- freerapid -->
<rect x="350.300" y="463.600" width="13.900" height="14.600" rx="3.400" fill="url(#pub)" stroke="#8a82ca" stroke-width="0.600"/>
<path d="M355.300 466.200h4v4.400h2.200l-4.200 4.600l-4.200-4.600h2.200z" fill="#fff"/>
<!-- xnview -->
<g transform="translate(500.500 470.900) scale(1.270)">
<path d="M-5.400 1.200L-4-.6L-5.200-2.600L-3-2.700L-3.100-4.900L-1.200-3.600L0-5.800L1.200-3.600L3.100-4.900L3-2.700L5.200-2.600L4-.6L5.400 1.200Q3.600 4.300 0 4.300Q-3.600 4.300-5.400 1.200z" fill="#f08c10"/>
<ellipse cx="0" cy=".9" rx="3.700" ry="2.600" fill="#ffb32e"/>
<circle cx="-.2" cy=".8" r="1.700" fill="#d8201a"/>
</g>
<!-- zoom in -->
<path d="M710.700 456.800l2.900 2.700" stroke="#a86a28" stroke-width="2.100" stroke-linecap="round"/>
<path d="M710.700 456.800l2.900 2.700" stroke="#e2a452" stroke-width="1.300" stroke-linecap="round"/>
<circle cx="708.400" cy="454.500" r="2.800" fill="#f0f0fc" stroke="#9698de" stroke-width="0.600"/>
<path d="M706.600 454.500h3.600M708.400 452.700v3.600" stroke="#2c2cb0" stroke-width="1.100"/>
<!-- zoom out -->
<path d="M761.600 456.800l2.900 2.700" stroke="#a86a28" stroke-width="2.100" stroke-linecap="round"/>
<path d="M761.600 456.800l2.900 2.700" stroke="#e2a452" stroke-width="1.300" stroke-linecap="round"/>
<circle cx="759.300" cy="454.500" r="2.800" fill="#f0f0fc" stroke="#9698de" stroke-width="0.600"/>
<path d="M757.500 454.500h3.600" stroke="#2c2cb0" stroke-width="1.100"/>
<!-- spin arrows -->
<path d="M746 455.200l.9-1.300l.9 1.300zM746 457.200l.9 1.300l.9-1.300z" fill="#ccd3c0"/>
</svg>

<!-- shapes -->
<svg style="left:225px;top:91.0px" width="6" height="6" viewBox="0 0 6 6"><path d="M1.400 1.600L4.100 3L1.400 4.400z" fill="#b7bfab"/></svg>
<svg style="left:225px;top:103.8px" width="6" height="6" viewBox="0 0 6 6"><path d="M1.400 1.600L4.100 3L1.400 4.400z" fill="#b7bfab"/></svg>
<svg style="left:225px;top:116.6px" width="6" height="6" viewBox="0 0 6 6"><path d="M1.400 1.600L4.100 3L1.400 4.400z" fill="#b7bfab"/></svg>
<svg style="left:225px;top:129.4px" width="6" height="6" viewBox="0 0 6 6"><path d="M1.400 1.600L4.100 3L1.400 4.400z" fill="#b7bfab"/></svg>
<svg style="left:225px;top:142.2px" width="6" height="6" viewBox="0 0 6 6"><path d="M1.400 1.600L4.100 3L1.400 4.400z" fill="#b7bfab"/></svg>
<svg style="left:225px;top:155.0px" width="6" height="6" viewBox="0 0 6 6"><path d="M1.400 1.600L4.100 3L1.400 4.400z" fill="#b7bfab"/></svg>
<div class="abs" style="left:89px;top:189.85px;width:143.4px;height:0.9px;background:#3d4535"></div>
<div class="abs" style="left:89px;top:229.05px;width:143.4px;height:0.9px;background:#3d4535"></div>
<div class="abs" style="left:89px;top:255.30px;width:143.4px;height:0.9px;background:#3d4535"></div>
<div class="abs" style="left:89px;top:280.80px;width:143.4px;height:0.9px;background:#3d4535"></div>
<!-- text -->
<div id="txt">
<div class="t" id="t0" style="left:324.70px;top:2.22px;font-size:48.0px;line-height:57.60px;font-weight:bold;color:#f3f0cc;transform:scale(0.12042,0.12500);-webkit-text-stroke:0;">Clouds 0 °C</div>
<div class="t" id="t1" style="left:363.00px;top:2.22px;font-size:48.0px;line-height:57.60px;font-weight:bold;color:#f3f0cc;transform:scale(0.12531,0.12500);-webkit-text-stroke:0;">Sobota, 28. prosince 2019, 01:51:54</div>
<div class="t" id="t2" style="left:357.60px;top:14.32px;font-size:48.0px;line-height:57.60px;font-weight:bold;color:#dfe3d4;transform:scale(0.12226,0.12500);-webkit-text-stroke:0;">cz.png - XnView MP</div>
<div class="t" id="t3" style="left:675.20px;top:2.88px;font-size:42.4px;line-height:50.88px;font-weight:bold;color:#9aa68e;transform:scale(0.10449,0.12500);-webkit-text-stroke:0;">A</div>
<div class="t" id="t4" style="left:684.30px;top:3.06px;font-size:39.2px;line-height:47.04px;font-weight:bold;color:#4e6044;transform:scale(0.11011,0.12500);-webkit-text-stroke:0;">1</div>
<div class="t" id="t5" style="left:3.75px;top:27.94px;font-size:50.4px;line-height:60.48px;font-weight:normal;color:#dce2d1;transform:scale(0.11634,0.12500);">Průzkumník</div>
<div class="t" id="t6" style="left:69.40px;top:27.94px;font-size:50.4px;line-height:60.48px;font-weight:normal;color:#e8ecdf;transform:scale(0.11349,0.12500);">cz.png</div>
<div class="t" id="t7" style="left:5.60px;top:41.04px;font-size:50.4px;line-height:60.48px;font-weight:normal;color:#eef1e8;transform:scale(0.11753,0.12500);"><u>S</u>oubor</div>
<div class="t" id="t8" style="left:33.40px;top:41.04px;font-size:50.4px;line-height:60.48px;font-weight:normal;color:#eef1e8;transform:scale(0.12012,0.12500);"><u>Z</u>měnit</div>
<div class="t" id="t9" style="left:60.90px;top:41.04px;font-size:50.4px;line-height:60.48px;font-weight:normal;color:#eef1e8;transform:scale(0.11865,0.12500);">Zo<u>b</u>razit</div>
<div class="t" id="t10" style="left:91.90px;top:41.04px;font-size:50.4px;line-height:60.48px;font-weight:normal;color:#eef1e8;transform:scale(0.11473,0.12500);"><u>O</u>brázek</div>
<div class="t" id="t11" style="left:122.80px;top:41.04px;font-size:50.4px;line-height:60.48px;font-weight:normal;color:#eef1e8;transform:scale(0.11831,0.12500);"><u>N</u>ástroje</div>
<div class="t" id="t12" style="left:154.00px;top:41.04px;font-size:50.4px;line-height:60.48px;font-weight:normal;color:#eef1e8;transform:scale(0.11752,0.12500);">Nápo<u>v</u>ěda</div>
<div class="t" id="t13" style="left:100.80px;top:51.84px;font-size:50.4px;line-height:60.48px;font-weight:normal;color:#eef1e8;transform:scale(0.12074,0.12500);">Spočítat použité barvy</div>
<div class="t" id="t14" style="left:100.80px;top:64.54px;font-size:50.4px;line-height:60.48px;font-weight:normal;color:#eef1e8;transform:scale(0.11971,0.12500);">Změnit barevnou hloubku...</div>
<div class="t" id="t15" style="left:100.80px;top:77.54px;font-size:50.4px;line-height:60.48px;font-weight:normal;color:#eef1e8;transform:scale(0.11679,0.12500);">Remove alpha channel</div>
<div class="t" id="t16" style="left:100.80px;top:90.04px;font-size:50.4px;line-height:60.48px;font-weight:normal;color:#eef1e8;transform:scale(0.11502,0.12500);">Mapa</div>
<div class="t" id="t17" style="left:100.80px;top:102.64px;font-size:50.4px;line-height:60.48px;font-weight:normal;color:#eef1e8;transform:scale(0.12075,0.12500);">Přizpůsobit</div>
<div class="t" id="t18" style="left:100.80px;top:116.24px;font-size:50.4px;line-height:60.48px;font-weight:normal;color:#eef1e8;transform:scale(0.12498,0.12500);">Otočit</div>
<div class="t" id="t19" style="left:100.80px;top:129.04px;font-size:50.4px;line-height:60.48px;font-weight:normal;color:#eef1e8;transform:scale(0.11520,0.12500);">Zrcadlení</div>
<div class="t" id="t20" style="left:100.80px;top:141.74px;font-size:50.4px;line-height:60.48px;font-weight:normal;color:#eef1e8;transform:scale(0.12031,0.12500);">Zaměnit</div>
<div class="t" id="t21" style="left:100.80px;top:153.94px;font-size:50.4px;line-height:60.48px;font-weight:normal;color:#eef1e8;transform:scale(0.11882,0.12500);">Extrahovat kanál</div>
<div class="t" id="t22" style="left:100.80px;top:167.24px;font-size:50.4px;line-height:60.48px;font-weight:normal;color:#1f2c15;transform:scale(0.11904,0.12500);">Změnit velikost...</div>
<div class="t" id="t23" style="left:208.30px;top:167.24px;font-size:50.4px;line-height:60.48px;font-weight:normal;color:#1f2c15;transform:scale(0.11411,0.12500);">Shift+S</div>
<div class="t" id="t24" style="left:100.80px;top:180.24px;font-size:50.4px;line-height:60.48px;font-weight:normal;color:#eef1e8;transform:scale(0.12034,0.12500);">Změnit velikost plátna...</div>
<div class="t" id="t25" style="left:207.90px;top:180.24px;font-size:50.4px;line-height:60.48px;font-weight:normal;color:#eef1e8;transform:scale(0.11461,0.12500);">Shift+C</div>
<div class="t" id="t26" style="left:100.80px;top:193.14px;font-size:50.4px;line-height:60.48px;font-weight:normal;color:#eef1e8;transform:scale(0.12019,0.12500);">Reflektor...</div>
<div class="t" id="t27" style="left:100.80px;top:205.94px;font-size:50.4px;line-height:60.48px;font-weight:normal;color:#eef1e8;transform:scale(0.11574,0.12500);">Korekce červených očí</div>
<div class="t" id="t28" style="left:100.80px;top:218.84px;font-size:50.4px;line-height:60.48px;font-weight:normal;color:#eef1e8;transform:scale(0.11812,0.12500);">Kreslit...</div>
<div class="t" id="t29" style="left:207.10px;top:218.84px;font-size:50.4px;line-height:60.48px;font-weight:normal;color:#eef1e8;transform:scale(0.11941,0.12500);">Shift+D</div>
<div class="t" id="t30" style="left:100.80px;top:232.24px;font-size:50.4px;line-height:60.48px;font-weight:normal;color:#eef1e8;transform:scale(0.11741,0.12500);">Simulace filmu...</div>
<div class="t" id="t31" style="left:100.80px;top:245.04px;font-size:50.4px;line-height:60.48px;font-weight:normal;color:#eef1e8;transform:scale(0.11235,0.12500);">Odsazení...</div>
<div class="t" id="t32" style="left:100.80px;top:258.44px;font-size:50.4px;line-height:60.48px;font-weight:normal;color:#eef1e8;transform:scale(0.11772,0.12500);">Filtr...</div>
<div class="t" id="t33" style="left:100.80px;top:270.84px;font-size:50.4px;line-height:60.48px;font-weight:normal;color:#eef1e8;transform:scale(0.12346,0.12500);">Použít filtr...</div>
<div class="t" id="t34" style="left:100.80px;top:284.24px;font-size:50.4px;line-height:60.48px;font-weight:normal;color:#7f8a75;transform:scale(0.11779,0.12500);">Upravit mapu barev...</div>
<div class="t" id="t35" style="left:1.60px;top:453.51px;font-size:46.4px;line-height:55.68px;font-weight:normal;color:#dde3d1;transform:scale(0.12968,0.12500);-webkit-text-stroke:0.25px currentColor;">66/262</div>
<div class="t" id="t36" style="left:24.40px;top:453.51px;font-size:46.4px;line-height:55.68px;font-weight:normal;color:#dde3d1;transform:scale(0.12327,0.12500);-webkit-text-stroke:0.25px currentColor;">cz.png</div>
<div class="t" id="t37" style="left:45.90px;top:453.51px;font-size:46.4px;line-height:55.68px;font-weight:normal;color:#dde3d1;transform:scale(0.11831,0.12500);-webkit-text-stroke:0.25px currentColor;">13.75 KiB</div>
<div class="t" id="t38" style="left:74.70px;top:453.51px;font-size:46.4px;line-height:55.68px;font-weight:normal;color:#dde3d1;transform:scale(0.12717,0.12500);-webkit-text-stroke:0.25px currentColor;">320x240x32 (1.33)</div>
<div class="t" id="t39" style="left:128.30px;top:453.51px;font-size:46.4px;line-height:55.68px;font-weight:normal;color:#dde3d1;transform:scale(0.12730,0.12500);-webkit-text-stroke:0.25px currentColor;">4.44x3.33 palců</div>
<div class="t" id="t40" style="left:174.40px;top:453.51px;font-size:46.4px;line-height:55.68px;font-weight:normal;color:#dde3d1;transform:scale(0.11715,0.12500);-webkit-text-stroke:0.25px currentColor;">100%</div>
<div class="t" id="t41" style="left:721.90px;top:453.51px;font-size:46.4px;line-height:55.68px;font-weight:normal;color:#c9d0bd;transform:scale(0.11967,0.12500);-webkit-text-stroke:0.25px currentColor;">100%</div>
<div class="t" id="t42" style="left:221.90px;top:466.94px;font-size:51.2px;line-height:61.44px;font-weight:normal;color:#e8ebd9;transform:scale(0.11631,0.12500);">Vytvořit nový přís...</div>
<div class="t" id="t43" style="left:294.10px;top:466.94px;font-size:51.2px;line-height:61.44px;font-weight:normal;color:#e8ebd9;transform:scale(0.10843,0.12500);">[Double Command...</div>
<div class="t" id="t44" style="left:366.20px;top:466.94px;font-size:51.2px;line-height:61.44px;font-weight:normal;color:#e8ebd9;transform:scale(0.10965,0.12500);">[FreeRapid Downl...</div>
<div class="t" id="t45" style="left:438.00px;top:466.94px;font-size:51.2px;line-height:61.44px;font-weight:normal;color:#e8ebd9;transform:scale(0.10821,0.12500);">[Double Command...</div>
<div class="t" id="t46" style="left:509.30px;top:466.94px;font-size:51.2px;line-height:61.44px;font-weight:normal;color:#eef1e2;transform:scale(0.10784,0.12500);">cz.png - XnView MP</div>
</div>
</body></html>
